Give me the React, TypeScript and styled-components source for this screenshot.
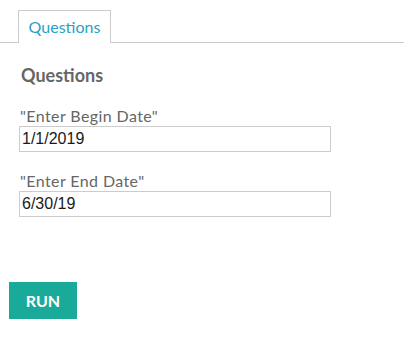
import React from "react";
import styled, { createGlobalStyle } from "styled-components";

const Global = createGlobalStyle`
  html, body { margin: 0; padding: 0; background: #fff; }
  body { font-family: Lato, "Open Sans", sans-serif; }
`;

const Page = styled.div`
  width: 404px;
  height: 345px;
  display: flex;
  flex-direction: column;
`;

const TabBar = styled.div`
  display: flex;
  padding: 10px 0 0 18px;
  border-bottom: 1px solid #cccccc;
  height: 32px;
  box-sizing: content-box;
`;

const Tab = styled.div`
  width: 93px;
  box-sizing: border-box;
  border: 1px solid #cccccc;
  border-bottom: none;
  background: #fff;
  margin-bottom: -1px;
  height: 33px;
  display: flex;
  align-items: center;
  justify-content: center;
  color: #2a9fc8;
  font-size: 16px;
  padding-bottom: 2px;
`;

const Body = styled.div`
  display: flex;
  flex-direction: column;
  padding: 21px 0 0 19px;
`;

const Heading = styled.h2`
  margin: 0 0 0 2px;
  font-size: 18px;
  font-weight: 700;
  color: #666666;
  line-height: 22px;
`;

const Field = styled.div`
  display: flex;
  flex-direction: column;
  margin-top: ${(p: { $top: number }) => p.$top}px;
`;

const Label = styled.label`
  font-size: 16px;
  letter-spacing: 0.4px;
  color: #666666;
  line-height: 20px;
  margin-left: 1px;
`;

const Input = styled.input`
  width: 312px;
  height: 26px;
  box-sizing: border-box;
  border: 1px solid #cccccc;
  margin: 0;
  padding: 0 2px;
  font-family: "Liberation Sans", Arial, sans-serif;
  font-size: 16px;
  color: #1a1a1a;
  outline: none;
`;

const RunButton = styled.button`
  margin: 65px 0 0 9px;
  width: 68px;
  height: 37px;
  border: none;
  background: #1aaa9a;
  color: #fff;
  font-family: Lato, sans-serif;
  font-weight: 700;
  font-size: 16px;
  align-self: flex-start;
  padding: 0;
`;

export default function App() {
  return (
    <Page>
      <Global />
      <TabBar>
        <Tab>Questions</Tab>
      </TabBar>
      <Body>
        <Heading>Questions</Heading>
        <Field $top={20}>
          <Label>"Enter Begin Date"</Label>
          <Input defaultValue="1/1/2019" />
        </Field>
        <Field $top={19}>
          <Label>"Enter End Date"</Label>
          <Input defaultValue="6/30/19" />
        </Field>
      </Body>
      <RunButton>RUN</RunButton>
    </Page>
  );
}
